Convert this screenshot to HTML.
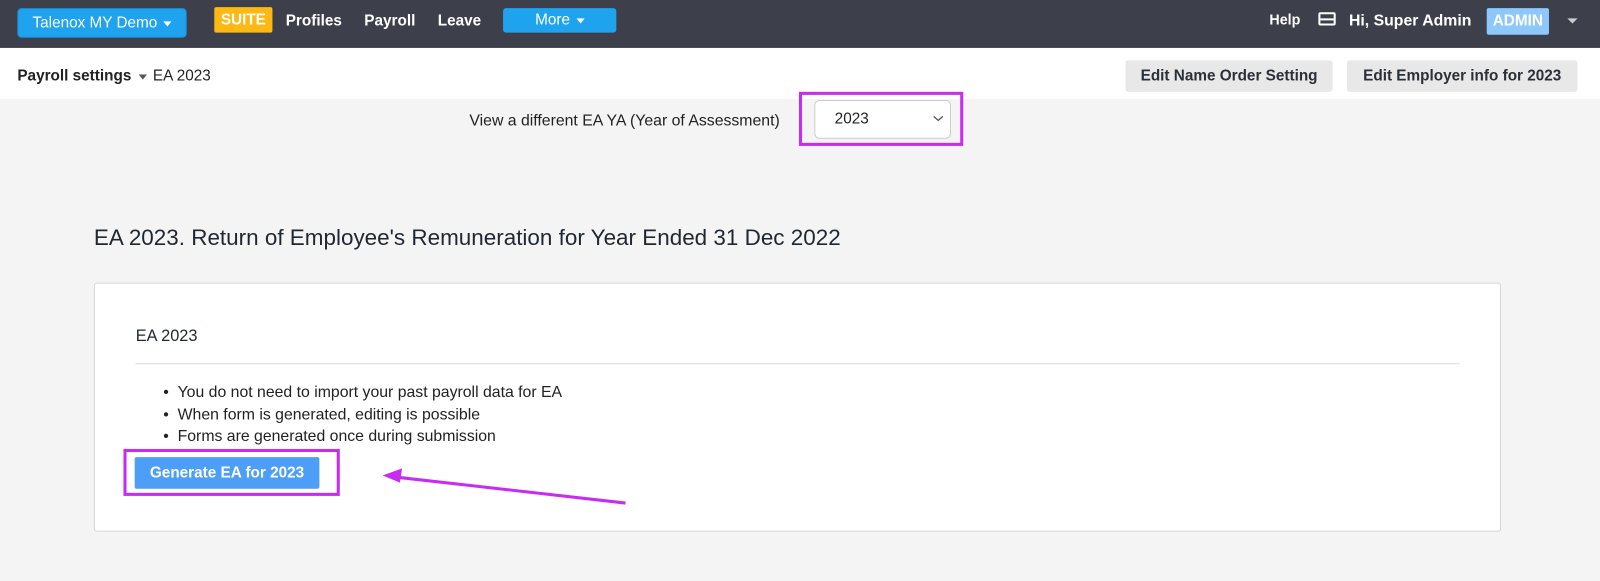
<!DOCTYPE html>
<html><head><meta charset="utf-8"><style>
*{box-sizing:border-box;margin:0;padding:0}
body{width:1600px;height:569px;background:#f4f4f4;font-family:"Liberation Sans",Arial,sans-serif;color:#222;position:relative;overflow:hidden}
#w{position:absolute;left:0;top:0;width:1568px;height:558px;transform:scale(1.0204);transform-origin:0 0}
.a{position:absolute;white-space:nowrap}
.nav{position:absolute;left:0;top:0;width:1600px;height:47px;background:#3d404a}
.sub{position:absolute;left:0;top:47px;width:1600px;height:50px;background:#fff}
.nl{color:#fff;font-weight:bold;font-size:15px}
.gb{background:#e8e8e8;border-radius:3px;color:#2b2f3a;font-weight:bold;font-size:15px;text-align:center;line-height:31px}
.car{display:inline-block;width:0;height:0;border-left:4px solid transparent;border-right:4px solid transparent;border-top:5px solid #fff;vertical-align:middle;margin-left:6px}
</style></head><body><div id="w">
<div class="nav"></div>
<div class="a" style="left:17px;top:8px;width:166px;height:29px;background:#1fa3ee;border-radius:4px;border:1px solid #1b8fd4;color:#fff;font-size:15px;line-height:27px;text-align:center">Talenox MY Demo<span class="car"></span></div>
<div class="a" style="left:210px;top:7px;width:57px;height:25px;background:#fdb813;border-radius:2px;color:#fff;font-weight:bold;font-size:15px;line-height:25px;text-align:center">SUITE</div>
<div class="a nl" style="left:280px;top:12px">Profiles</div>
<div class="a nl" style="left:357px;top:12px">Payroll</div>
<div class="a nl" style="left:429px;top:12px">Leave</div>
<div class="a" style="left:493px;top:8px;width:111px;height:24px;background:#1fa3ee;border-radius:3px;color:#fff;font-size:15px;line-height:24px;text-align:center">More<span class="car"></span></div>
<div class="a nl" style="left:1244px;top:11px;font-size:14px">Help</div>
<div class="a" style="left:1292px;top:12px;width:17px;height:13px;border:2px solid #fff;border-radius:2px"><div style="margin-top:4px;height:2px;background:#fff"></div></div>
<div class="a nl" style="left:1322px;top:12px;font-size:15.5px">Hi, Super Admin</div>
<div class="a" style="left:1457px;top:8px;width:61px;height:26px;background:#8ec8fb;border-radius:2px;color:#fff;font-weight:bold;font-size:15px;line-height:26px;text-align:center">ADMIN</div>
<div class="a" style="left:1536px;top:18px;border-left:5px solid transparent;border-right:5px solid transparent;border-top:5px solid #ccc"></div>
<div class="sub"></div>
<div class="a" style="left:17px;top:66px;font-size:15px;font-weight:bold;color:#222">Payroll settings <span style="display:inline-block;border-left:4px solid transparent;border-right:4px solid transparent;border-top:5px solid #555;vertical-align:middle;margin:0 6px 0 3px"></span><span style="font-weight:normal">EA 2023</span></div>
<div class="a gb" style="left:1103px;top:59px;width:203px;height:31px">Edit Name Order Setting</div>
<div class="a gb" style="left:1320px;top:59px;width:226px;height:31px">Edit Employer info for 2023</div>
<div class="a" style="left:460px;top:110px;font-size:15.5px;color:#222">View a different EA YA (Year of Assessment)</div>
<div class="a" style="left:783px;top:90px;width:161px;height:53px;border:3px solid #c72cf3"></div>
<div class="a" style="left:798px;top:98px;width:134px;height:38px;background:#fff;border:1px solid #ccc;border-radius:5px;font-size:15px;line-height:36px;padding-left:19px">2023
<svg style="position:absolute;right:6px;top:13px" width="11" height="8"><path d="M1 2l4.5 4 4.5-4" fill="none" stroke="#555" stroke-width="1.3"/></svg></div>
<div class="a" style="left:92px;top:220px;font-size:22px;color:#1f2733">EA 2023. Return of Employee's Remuneration for Year Ended 31 Dec 2022</div>
<div class="a" style="left:92px;top:277px;width:1379px;height:244px;background:#fff;border:1px solid #d6d6d6;border-radius:3px"></div>
<div class="a" style="left:133px;top:321px;font-size:16px;color:#1f2733">EA 2023</div>
<div class="a" style="left:133px;top:356px;width:1297px;height:1px;background:#d8d8d8"></div>
<div class="a" style="left:160px;top:374px;font-size:15.5px;line-height:21.5px;color:#222">• &nbsp;You do not need to import your past payroll data for EA<br>• &nbsp;When form is generated, editing is possible<br>• &nbsp;Forms are generated once during submission</div>
<div class="a" style="left:121px;top:440px;width:212px;height:46px;border:3px solid #c72cf3"></div>
<div class="a" style="left:132px;top:448px;width:181px;height:31px;background:#4d9ef7;border-radius:2px;color:#fff;font-weight:bold;font-size:15px;line-height:31px;text-align:center">Generate EA for 2023</div>
<svg class="a" style="left:0;top:0" width="1600" height="569"><path d="M613 493L392 468" stroke="#c72cf3" stroke-width="3"/><path d="M375 466L394 459L392 473Z" fill="#c72cf3"/></svg>
</div></body></html>
